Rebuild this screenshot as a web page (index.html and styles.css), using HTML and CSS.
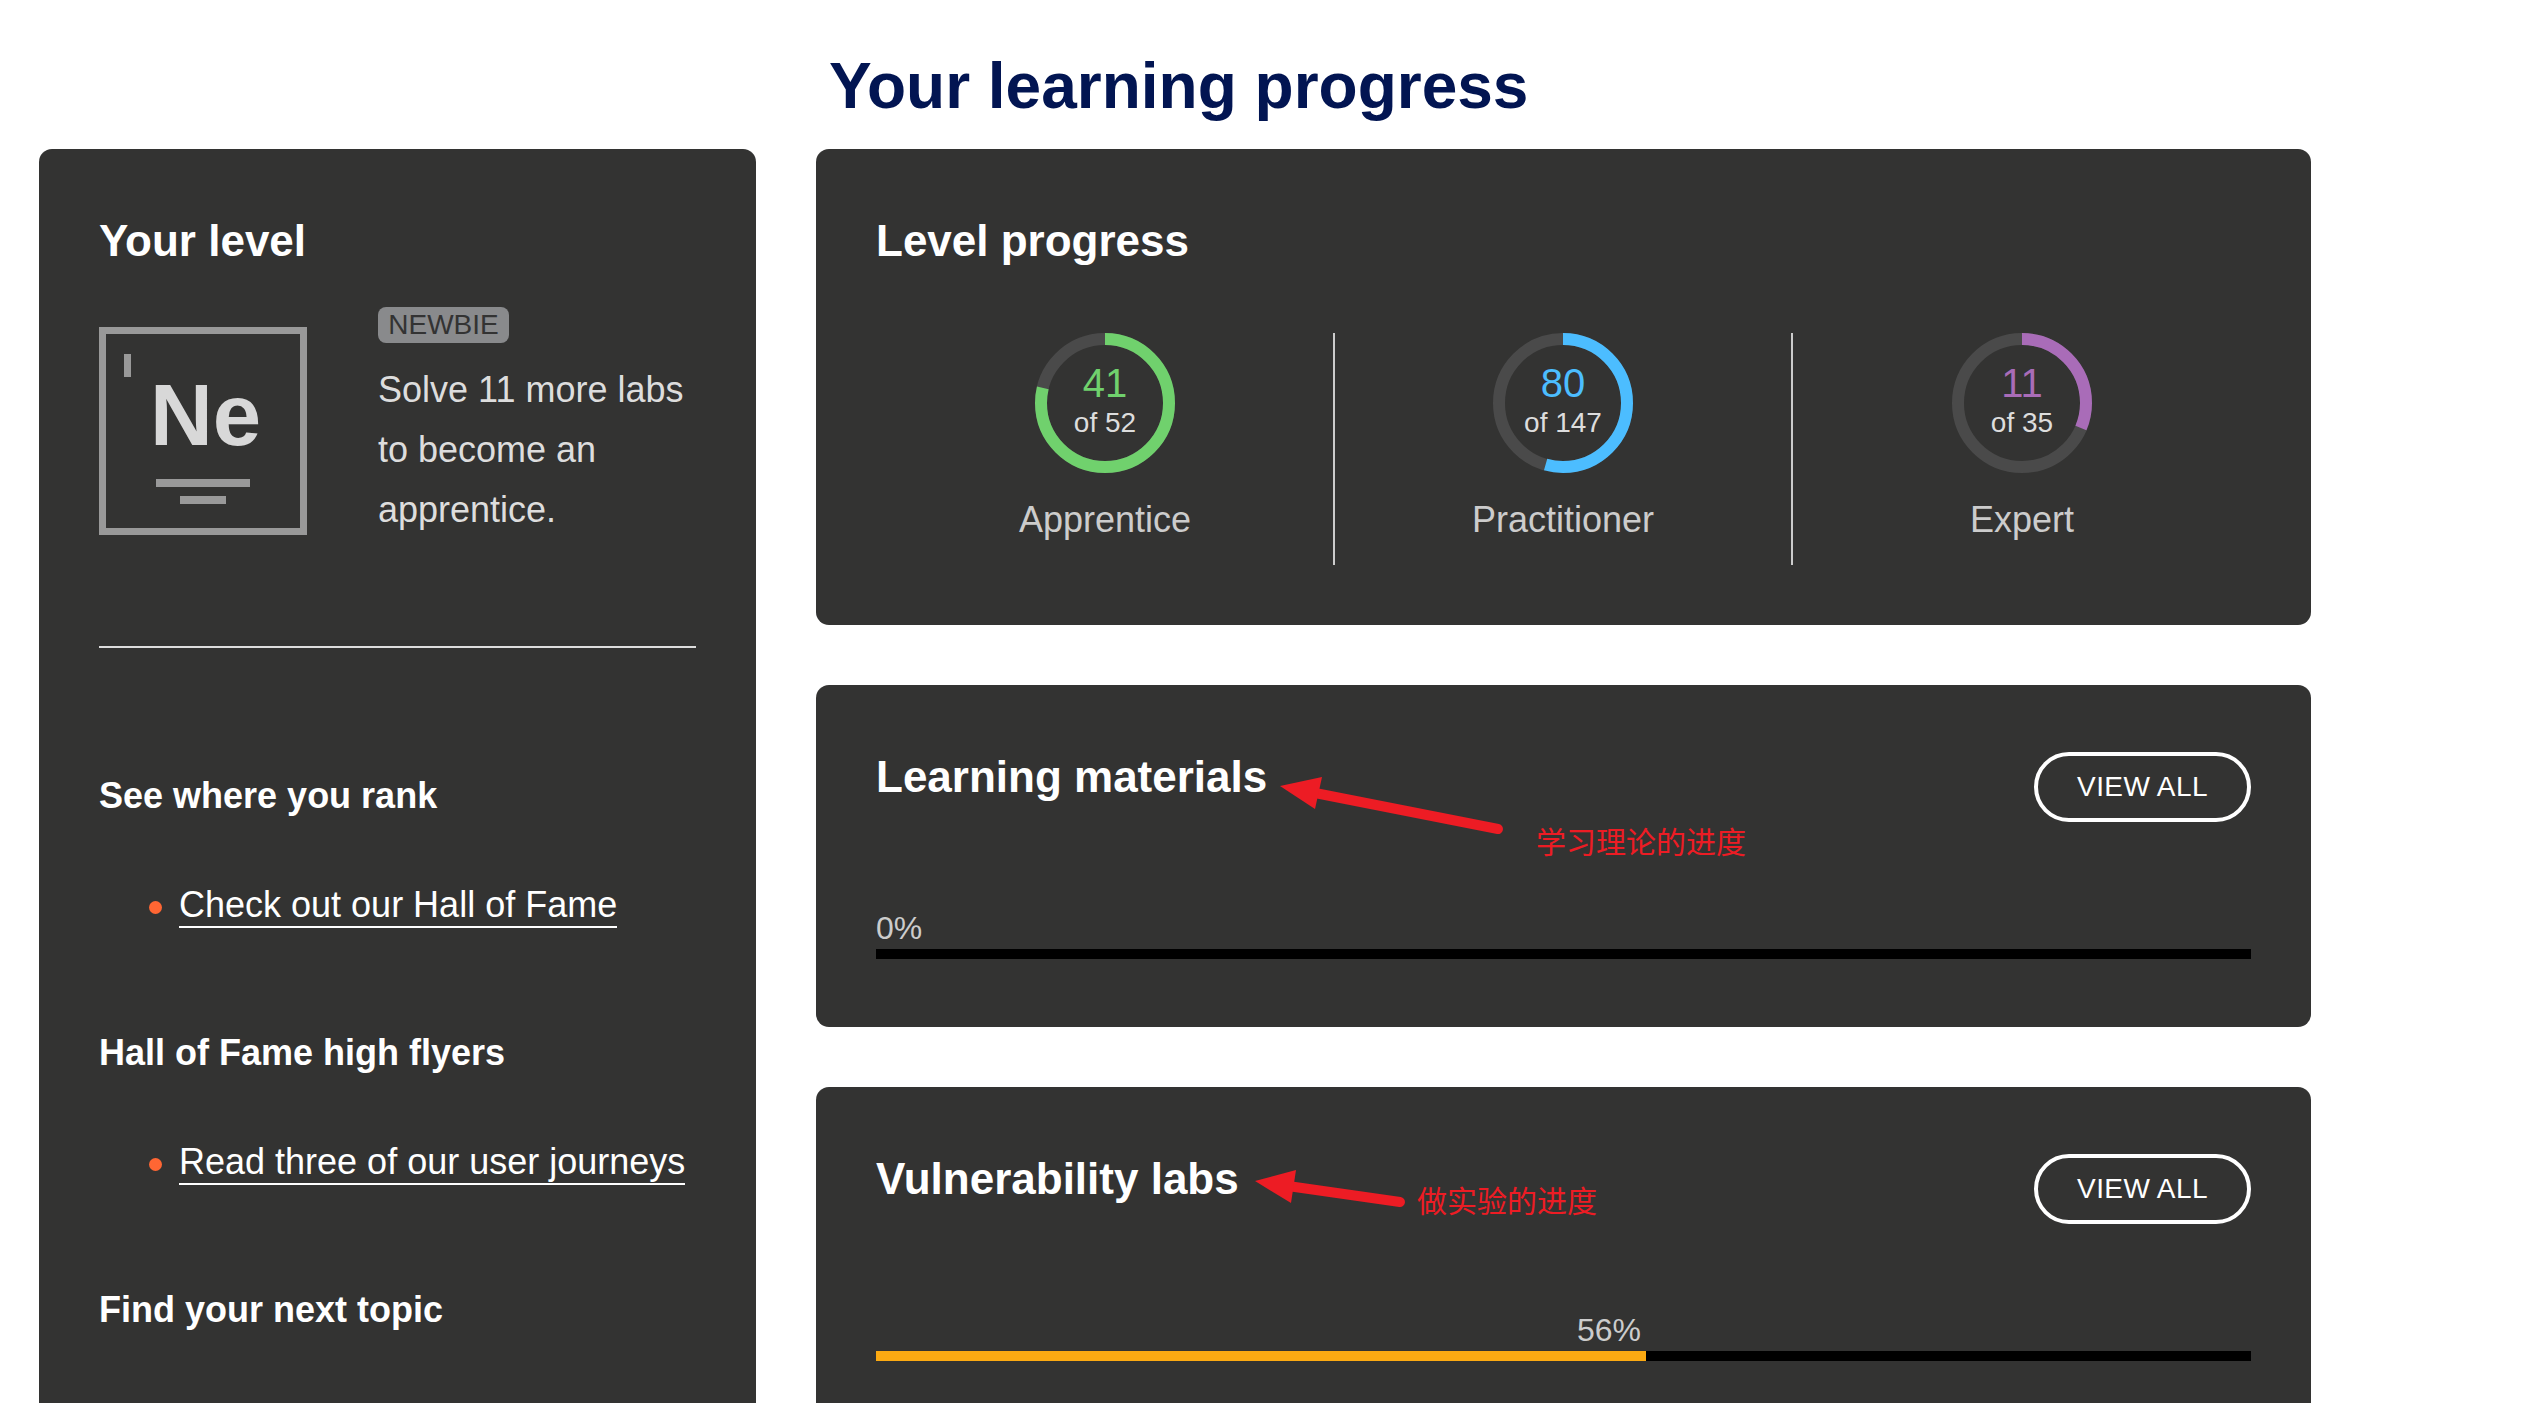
FILE: index.html
```html
<!DOCTYPE html>
<html lang="en">
<head>
	<title>Your learning progress</title>
	<meta charset="utf-8">
	<link rel="stylesheet" href="styles.css">
</head>
<body>
<div class="page">
	<h1 class="page-title">Your learning progress</h1>

	<aside class="card side">
		<h2>Your level</h2>
		<div class="level">
			<svg class="element" width="208" height="208" viewBox="0 0 208 208">
				<rect x="3.5" y="3.5" width="201" height="201" fill="none" stroke="#999" stroke-width="7"/>
				<rect x="25" y="27" width="7" height="23" fill="#999"/>
				<text x="51" y="118" class="element-symbol">Ne</text>
				<rect x="57" y="152" width="94" height="8" fill="#999"/>
				<rect x="81" y="169" width="46" height="8" fill="#999"/>
			</svg>
			<div class="level-text">
				<span class="badge">NEWBIE</span>
				<p>Solve 11 more labs to become an apprentice.</p>
			</div>
		</div>
		<hr>
		<h3>See where you rank</h3>
		<ul>
			<li><a href="#">Check out our Hall of Fame</a></li>
		</ul>
		<h3>Hall of Fame high flyers</h3>
		<ul>
			<li><a href="#">Read three of our user journeys</a></li>
		</ul>
		<h3>Find your next topic</h3>
	</aside>

	<main class="cards">
		<section class="card">
			<h2>Level progress</h2>
			<div class="levels">
				<div class="level-col">
					<div class="ring ring-green">
						<svg width="140" height="140" viewBox="0 0 140 140">
							<circle class="track" cx="70" cy="70" r="64"/>
							<circle class="value" cx="70" cy="70" r="64" pathLength="100" stroke-dasharray="78.8 100"/>
						</svg>
						<div class="ring-text"><span class="count">41</span><span class="total">of 52</span></div>
					</div>
					<div class="level-name">Apprentice</div>
				</div>
				<div class="level-col">
					<div class="ring ring-blue">
						<svg width="140" height="140" viewBox="0 0 140 140">
							<circle class="track" cx="70" cy="70" r="64"/>
							<circle class="value" cx="70" cy="70" r="64" pathLength="100" stroke-dasharray="54.4 100"/>
						</svg>
						<div class="ring-text"><span class="count">80</span><span class="total">of 147</span></div>
					</div>
					<div class="level-name">Practitioner</div>
				</div>
				<div class="level-col">
					<div class="ring ring-purple">
						<svg width="140" height="140" viewBox="0 0 140 140">
							<circle class="track" cx="70" cy="70" r="64"/>
							<circle class="value" cx="70" cy="70" r="64" pathLength="100" stroke-dasharray="31.4 100"/>
						</svg>
						<div class="ring-text"><span class="count">11</span><span class="total">of 35</span></div>
					</div>
					<div class="level-name">Expert</div>
				</div>
			</div>
		</section>

		<section class="card progress-card">
			<div class="card-head">
				<h2>Learning materials</h2>
				<a class="btn" href="#">VIEW ALL</a>
			</div>
			<div class="progress-label" style="width:0%">0%</div>
			<div class="bar"></div>

			<svg class="arrow arrow-materials" width="240" height="70" viewBox="0 0 240 70">
				<line x1="40" y1="27" x2="228" y2="64" stroke="#ed1c24" stroke-width="10" stroke-linecap="round"/>
				<polygon points="10,21 52,12 45,44" fill="#ed1c24"/>
			</svg>
			<span class="note note-materials">学习理论的进度</span>
		</section>

		<section class="card progress-card">
			<div class="card-head">
				<h2>Vulnerability labs</h2>
				<a class="btn" href="#">VIEW ALL</a>
			</div>
			<div class="progress-label" style="width:56%">56%</div>
			<div class="bar"><div class="bar-fill" style="width:56%"></div></div>

			<svg class="arrow arrow-labs" width="165" height="55" viewBox="0 0 165 55">
				<line x1="42" y1="26" x2="154" y2="42" stroke="#ed1c24" stroke-width="10" stroke-linecap="round"/>
				<polygon points="9,21 50,10 45,43" fill="#ed1c24"/>
			</svg>
			<span class="note note-labs">做实验的进度</span>
		</section>
	</main>
</div>
</body>
</html>
```

FILE: styles.css
```css
html, body {
	height: 100%;
	margin: 0;
	overflow: hidden;
}

body {
	background: #fff;
	color: #ddd;
	font-family: "Liberation Sans", Arial, sans-serif;
	font-size: 36px;
}

.page {
	display: grid;
	grid-template-columns: 717px 1495px;
	grid-template-rows: 149px auto;
	column-gap: 60px;
	padding-left: 39px;
}

.page-title {
	grid-column: 2;
	margin: 0;
	padding: 46px 0 0 13px;
	color: #021552;
	font-size: 64px;
	line-height: 80px;
}

.card {
	position: relative;
	padding: 60px;
	background: #333332;
	border-radius: 13px;
}

.cards {
	display: flex;
	flex-direction: column;
	gap: 60px;
}

h2 {
	margin: 0;
	color: #fff;
	font-size: 44px;
	line-height: 64px;
}

/* left column */
.side {
	padding-bottom: 200px;
}

.level {
	display: flex;
	gap: 71px;
	margin-top: 34px;
}

.element {
	flex: none;
	margin-top: 20px;
}

.element-symbol {
	fill: #d8d8d8;
	font-size: 87px;
	font-weight: bold;
}

.level-text p {
	margin: 17px 0 0;
	line-height: 60px;
}

.badge {
	display: block;
	width: 131px;
	height: 36px;
	box-sizing: border-box;
	background: #898a8c;
	border-radius: 8px;
	color: #333;
	font-size: 28px;
	line-height: 36px;
	text-align: center;
}

hr {
	height: 2px;
	margin: 106px 0 121px;
	border: 0;
	background: #ddd;
}

h3 {
	margin: 0;
	color: #fff;
	font-size: 36px;
	line-height: 54px;
}

ul {
	margin: 55px 0 94px;
	padding: 0 0 0 80px;
	list-style: none;
	line-height: 54px;
}

li {
	position: relative;
}

li:before {
	content: "";
	position: absolute;
	left: -30px;
	top: 23px;
	width: 13px;
	height: 13px;
	border-radius: 50%;
	background: #ff6633;
}

ul a {
	padding-bottom: 1px;
	color: #fff;
	text-decoration: none;
	border-bottom: 2px solid #fff;
}

/* level rings */
.levels {
	display: grid;
	grid-template-columns: repeat(3, 1fr);
	margin: 60px 0 0 1px;
}

.level-col {
	display: flex;
	flex-direction: column;
	align-items: center;
	height: 232px;
	border-right: 2px solid #ccc;
}

.level-col:last-child {
	border-right: 0;
}

.ring {
	display: grid;
	place-items: center;
	width: 140px;
	height: 140px;
}

.ring svg, .ring-text {
	grid-area: 1 / 1;
}

.ring svg {
	transform: rotate(-90deg);
}

.ring circle {
	fill: none;
	stroke-width: 12;
}

.ring .track {
	stroke: #4a4a4a;
}

.ring-green .value { stroke: #70d16d; }
.ring-blue .value { stroke: #4cbdff; }
.ring-purple .value { stroke: #a96cb8; }

.ring-green .count { color: #70d16d; }
.ring-blue .count { color: #4cbdff; }
.ring-purple .count { color: #a96cb8; }

.ring-text {
	display: flex;
	flex-direction: column;
	align-items: center;
	padding-bottom: 3px;
}

.count {
	font-size: 40px;
	line-height: 40px;
}

.total {
	margin-top: 3px;
	font-size: 28px;
	line-height: 34px;
}

.level-name {
	margin-top: 20px;
	color: #ccc;
	line-height: 54px;
}

/* progress cards */
.progress-card {
	padding-bottom: 68px;
}

.card-head {
	display: flex;
	justify-content: space-between;
	align-items: flex-start;
	margin-bottom: 88px;
}

.btn {
	width: 217px;
	height: 70px;
	box-sizing: border-box;
	margin-top: 7px;
	border: 4px solid #fff;
	border-radius: 35px;
	color: #fff;
	font-size: 28px;
	letter-spacing: .4px;
	line-height: 62px;
	text-align: center;
	text-decoration: none;
}

.progress-label {
	box-sizing: border-box;
	padding-right: 5px;
	margin-bottom: 3px;
	color: #ccc;
	font-size: 32px;
	line-height: 36px;
	text-align: right;
	white-space: nowrap;
}

.bar {
	height: 10px;
	background: #000;
}

.bar-fill {
	height: 100%;
	background: #fcaa12;
}

/* red annotations drawn over the cards */
.arrow, .note {
	position: absolute;
}

.arrow-materials { left: 454px; top: 80px; }
.arrow-labs { left: 430px; top: 73px; }

.note {
	color: #ed1c24;
	font-family: "Noto Sans CJK SC", sans-serif;
	font-size: 30px;
	line-height: 30px;
	white-space: nowrap;
}

.note-materials { left: 720px; top: 140px; }
.note-labs { left: 601px; top: 97px; }
```
